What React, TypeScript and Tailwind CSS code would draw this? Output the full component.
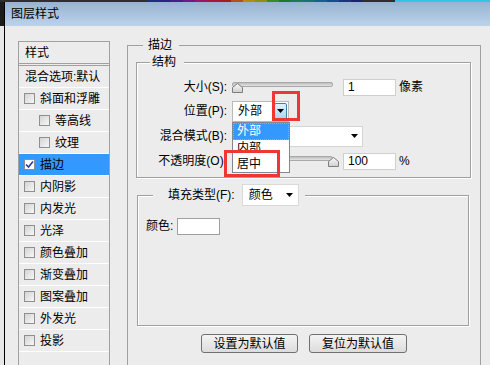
import React from "react";

const swatches = [
  "#1d2f7a", "#2a2486", "#4a1d86", "#6e1a7e", "#9a1766", "#a8163c", "#a81c1c", "#b4501a", "#b98a10",
  "#8d8f12", "#3f8a1f", "#1c7a2e", "#1a7a55", "#17736f", "#1a5f8c", "#1a4b8c", "#1c3478", "#1b2466",
];

const layers = [
  { label: "斜面和浮雕", indent: false, checked: false },
  { label: "等高线", indent: true, checked: false },
  { label: "纹理", indent: true, checked: false },
  { label: "描边", indent: false, checked: true },
  { label: "内阴影", indent: false, checked: false },
  { label: "内发光", indent: false, checked: false },
  { label: "光泽", indent: false, checked: false },
  { label: "颜色叠加", indent: false, checked: false },
  { label: "渐变叠加", indent: false, checked: false },
  { label: "图案叠加", indent: false, checked: false },
  { label: "外发光", indent: false, checked: false },
  { label: "投影", indent: false, checked: false },
];

const Check = ({ checked }: { checked: boolean }) => (
  <span
    className={`w-[11px] h-[11px] shrink-0 border border-[#8f8f8f] flex items-center justify-center ${
      checked ? "bg-white" : "bg-linear-to-br from-[#d4d4d4] to-[#f7f7f7]"
    }`}
  >
    {checked && (
      <svg width="9" height="9" viewBox="0 0 9 9">
        <path d="M1 4.5 L3.5 7 L8 1.5" fill="none" stroke="#2a3f9e" strokeWidth="1.6" />
      </svg>
    )}
  </span>
);

const Arrow = () => (
  <svg width="7" height="4" viewBox="0 0 7 4">
    <path d="M0 0 H7 L3.5 4 Z" fill="#000" />
  </svg>
);

const Slider = ({ at }: { at: "start" | "end" }) => (
  <div className="relative w-[101px] h-full">
    <div className="absolute left-0 right-0 top-[7px] h-[5px] rounded-[2px] border border-[#a9a9a9] bg-linear-to-b from-[#bdbdbd] to-[#e4e4e4]" />
    <svg
      width="11"
      height="10"
      viewBox="0 0 11 10"
      className={`absolute top-[8px] ${at === "start" ? "left-0" : "left-[96px]"}`}
    >
      <defs>
        <linearGradient id={`th-${at}`} x1="0" y1="0" x2="0" y2="1">
          <stop offset="0" stopColor="#fafafa" />
          <stop offset="1" stopColor="#cfcfcf" />
        </linearGradient>
      </defs>
      <path d="M0.5 9.5 V4.5 L5.5 0.5 L10.5 4.5 V9.5 Z" fill={`url(#th-${at})`} stroke="#7d7d7d" />
    </svg>
  </div>
);

const NumInput = ({ value }: { value: string }) => (
  <div className="ml-[10px] w-[53px] h-[17px] bg-white border border-[#cfcfcf] flex items-center pl-[4px] text-[12px]">
    {value}
  </div>
);

export default function App() {
  return (
    <div className="relative w-[490px] h-[365px] overflow-hidden flex flex-col bg-[#1c1c1c] text-black text-[12px] font-['Liberation_Sans','Noto_Sans_CJK_SC',sans-serif]">
      {/* top strip of the desktop behind */}
      <div className="h-[2px] flex shrink-0">
        <div className="w-[147px] bg-[#2e2e2e]" />
        {swatches.map((c) => (
          <div key={c} className="w-[12px]" style={{ background: c }} />
        ))}
        <div className="w-[32px] bg-[#2e2e2e]" />
        <div className="flex-1 bg-[#2fc6e0]" />
      </div>

      <div className="flex flex-1 min-h-0">
        <div className="w-[4px] flex flex-col">
          <div className="h-[24px] bg-[#1c1c1c]" />
          <div className="flex-1 bg-[#e8e8e8]" />
        </div>

        <div className="flex-1 min-w-0 flex flex-col border-l border-black">
          {/* title bar */}
          <div className="h-[24px] shrink-0 flex items-center pl-[6px] bg-linear-to-b from-[#98b3d1] to-[#bcd3ea] text-[12px]">
            图层样式
          </div>

          {/* body */}
          <div className="flex-1 flex bg-[#ececec] overflow-hidden">
            {/* styles list */}
            <div className="ml-[13px] mt-[15px] w-[92px] h-[340px] shrink-0 border border-[#a0a0a0]">
              <div className="h-[21px] flex items-center pl-[6px]">样式</div>
              <div className="h-[3px] border-y border-[#a0a0a0]" />
              <div className="h-[22px] flex items-center pl-[6px] border-b border-white">混合选项:默认</div>
              {layers.map((l) => (
                <div
                  key={l.label}
                  className={`h-[22px] flex items-center gap-[5px] border-b border-white ${
                    l.indent ? "pl-[20px]" : "pl-[5px]"
                  } ${l.checked ? "bg-[#3399ff]" : ""}`}
                >
                  <Check checked={l.checked} />
                  <span>{l.label}</span>
                </div>
              ))}
            </div>

            {/* 描边 */}
            <fieldset className="ml-[17px] mt-[11px] w-[354px] h-[360px] shrink-0 self-start border border-[#a0a0a0] px-[8px]">
              <legend className="ml-[7px] pl-[5px] pr-[7px] leading-[16px]">描边</legend>

              {/* 结构 */}
              <fieldset className="mt-[1px] w-[335px] border border-[#a0a0a0] shadow-[1px_1px_0_#fff,inset_1px_1px_0_#fff] pb-[4px]">
                <legend className="ml-[13px] pl-[2px] pr-[8px] leading-[16px] bg-[#ececec]">结构</legend>
                <div className="pt-[5px] flex flex-col">
                  <div className="h-[24px] flex items-center">
                    <span className="w-[90px] text-right">大小(S):</span>
                    <div className="ml-[5px] h-full">
                      <Slider at="start" />
                    </div>
                    <NumInput value="1" />
                    <span className="ml-[3px]">像素</span>
                  </div>

                  <div className="h-[24px] flex items-center">
                    <span className="w-[90px] text-right">位置(P):</span>
                    <div className="relative ml-[5px] w-[57px] h-[21px] bg-white border border-[#b9b9b9] flex items-center justify-between pl-[5px] pr-[1px]">
                      <span>外部</span>
                      <span className="w-[13px] h-[17px] rounded-[2px] border border-[#3c7fb1] bg-linear-to-b from-[#e3f1fb] to-[#a9d3f2] flex items-center justify-center">
                        <Arrow />
                      </span>
                      {/* open list */}
                      <div className="absolute z-10 left-[-1px] top-[20px] w-[58px] bg-white border border-[#828790] flex flex-col">
                        <div className="h-[17px] flex items-center pl-[4px] bg-[#3399ff] text-white outline outline-1 outline-dotted outline-[#e0a040] -outline-offset-1">
                          外部
                        </div>
                        <div className="h-[16px] flex items-center pl-[4px]">内部</div>
                        <div className="h-[16px] flex items-center pl-[4px]">居中</div>
                      </div>
                    </div>
                  </div>

                  <div className="h-[26px] flex items-center">
                    <span className="w-[90px] text-right">混合模式(B):</span>
                    <div className="ml-[5px] w-[131px] h-[21px] bg-white border border-[#d4d4d4] flex items-center justify-end pr-[4px]">
                      <Arrow />
                    </div>
                  </div>

                  <div className="h-[24px] flex items-center">
                    <span className="w-[90px] text-right">不透明度(O):</span>
                    <div className="ml-[5px] h-full">
                      <Slider at="end" />
                    </div>
                    <NumInput value="100" />
                    <span className="ml-[3px]">%</span>
                  </div>
                </div>
              </fieldset>

              {/* 填充类型 */}
              <fieldset className="mt-[6px] ml-[1px] w-[332px] h-[142px] border border-[#a0a0a0] shadow-[1px_1px_0_#fff,inset_1px_1px_0_#fff]">
                <legend className="ml-[15px] pl-[15px] pr-[6px] bg-[#ececec]">
                  <div className="flex items-center">
                    <span>填充类型(F):</span>
                    <div className="ml-[7px] w-[57px] h-[22px] bg-white border border-[#d9d9d9] flex items-center justify-between pl-[6px] pr-[5px]">
                      <span>颜色</span>
                      <Arrow />
                    </div>
                  </div>
                </legend>
                <div className="mt-[11px] pl-[8px] flex items-center">
                  <span>颜色:</span>
                  <div className="ml-[4px] w-[43px] h-[17px] bg-white border border-[#a0a0a0]" />
                </div>
              </fieldset>

              <div className="mt-[8px] flex justify-center gap-[11px]">
                <button className="w-[97px] h-[19px] rounded-[3px] border border-[#707070] bg-linear-to-b from-[#f4f4f4] to-[#dcdcdc] text-[12px] leading-none">
                  设置为默认值
                </button>
                <button className="w-[98px] h-[19px] rounded-[3px] border border-[#707070] bg-linear-to-b from-[#f4f4f4] to-[#dcdcdc] text-[12px] leading-none">
                  复位为默认值
                </button>
              </div>
            </fieldset>
          </div>
        </div>
      </div>

      {/* red annotation boxes */}
      <div className="absolute z-20 left-[272px] top-[91px] w-[28px] h-[30px] border-[3px] border-[#ee3636]" />
      <div className="absolute z-20 left-[224px] top-[150px] w-[56px] h-[27px] border-[3px] border-[#ee3636]" />
    </div>
  );
}
